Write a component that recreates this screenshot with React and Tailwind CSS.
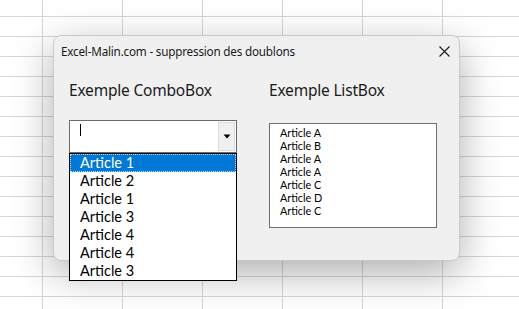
import React from 'react';

const comboItems = ['Article 1', 'Article 2', 'Article 1', 'Article 3', 'Article 4', 'Article 4', 'Article 3'];
const listItems = ['Article A', 'Article B', 'Article A', 'Article A', 'Article C', 'Article D', 'Article C'];

// Feuille de calcul en fond
function SheetGrid() {
  const rows = Array.from({ length: 16 });
  const cols = Array.from({ length: 7 });
  return (
    <div className="flex flex-col">
      {rows.map((_, r) => (
        <div key={r} className={`flex ${r === 0 ? 'h-[17px]' : 'h-[20px]'} border-b border-[#d6d6d6]`}>
          {cols.map((_, c) => (
            <div
              key={c}
              className={`${c === 0 ? 'w-[43px]' : 'w-[80px]'} shrink-0 border-r border-[#d6d6d6]`}
            />
          ))}
        </div>
      ))}
    </div>
  );
}

function ComboBox() {
  return (
    <div className="relative w-[168px]">
      <div className="flex h-[33px] border border-[#6b6b6b] bg-white">
        <div className="flex-1 pl-[10px] pt-[3px]">
          <div className="w-px h-[12px] bg-black" />
        </div>
        <div className="w-[17px] m-px bg-[#f0f0f0] border border-[#dcdcdc] flex items-center justify-center">
          <svg width="8" height="5" viewBox="0 0 8 5">
            <path d="M0.5 0.5 L7.5 0.5 L4 4.5 Z" fill="#000" />
          </svg>
        </div>
      </div>
      {/* liste déroulante ouverte */}
      <div
        className="absolute left-0 top-full w-[168px] bg-white border border-black z-10"
        style={{ fontFamily: 'Lato, "Noto Sans", sans-serif' }}
      >
        {comboItems.map((item, i) => (
          <div
            key={i}
            className={`h-[18px] flex items-center pl-[10px] text-[14.5px] leading-none ${
              i === 0 ? 'bg-[#0078d7] text-white outline-1 outline-dotted outline-[#bfe0ff] -outline-offset-1' : 'text-black'
            }`}
          >
            {item}
          </div>
        ))}
      </div>
    </div>
  );
}

function ListBox() {
  return (
    <div
      className="w-[168px] h-[105px] border border-[#6e6e6e] bg-white pl-[10px] pt-[2px]"
      style={{ fontFamily: 'Lato, "Noto Sans", sans-serif' }}
    >
      {listItems.map((item, i) => (
        <div key={i} className="h-[13px] leading-[13px] text-[10.8px] text-black">
          {item}
        </div>
      ))}
    </div>
  );
}

export default function App() {
  return (
    <div
      className="relative w-[519px] h-[309px] overflow-hidden bg-white"
      style={{ fontFamily: '"Noto Sans", "Open Sans", sans-serif' }}
    >
      <SheetGrid />

      {/* Fenêtre UserForm */}
      <div className="absolute left-[53px] top-[35px] w-[407px] h-[226px] rounded-[8px] bg-[#f0f0f0] border border-[#c9c9c9] shadow-[0_12px_40px_rgba(0,0,0,0.32)]">
        <div className="h-[32px] flex items-center justify-between pl-[7px] pr-[9px]">
          <span className="text-[11.7px] text-[#1a1a1a] tracking-[-0.2px]">Excel-Malin.com - suppression des doublons</span>
          <svg width="11" height="11" viewBox="0 0 11 11" className="mt-[-1px]">
            <path d="M0.5 0.5 L10.5 10.5 M10.5 0.5 L0.5 10.5" stroke="#1a1a1a" strokeWidth="1.1" />
          </svg>
        </div>

        <div className="flex pl-[15px] pt-[12px]">
          <div className="w-[200px]">
            <div className="text-[15.5px] leading-[20px] text-[#1a1a1a] tracking-[-0.2px]">Exemple ComboBox</div>
            <div className="mt-[20px]">
              <ComboBox />
            </div>
          </div>
          <div>
            <div className="text-[15.5px] leading-[20px] text-[#1a1a1a] tracking-[-0.2px]">Exemple ListBox</div>
            <div className="mt-[23px]">
              <ListBox />
            </div>
          </div>
        </div>
      </div>
    </div>
  );
}
